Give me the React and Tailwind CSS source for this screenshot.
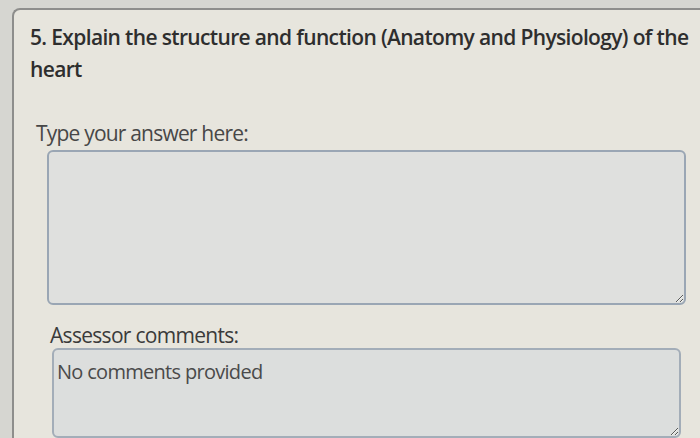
export default function App() {
    return (
        <div className="w-[700px] h-[438px] overflow-hidden bg-[#d6d6d1] pt-2 pl-3" style={{ fontFamily: '"Open Sans", "Liberation Sans", sans-serif' }}>
            {/* question card */}
            <div className="h-[440px] rounded-tl-lg border-l-2 border-t-2 border-[#8e8e8c] bg-[#e7e5dd] pt-[11px]">
                <h2 className="ml-[16px] text-[21px] leading-[32px] font-semibold text-[#2e2e2e] tracking-[-0.65px]">
                    5. Explain the structure and function (Anatomy and Physiology) of the heart
                </h2>

                <p className="ml-[22px] mt-[35px] text-[21px] leading-[26px] text-[#474747] tracking-[-0.8px]">Type your answer here:</p>
                <textarea
                    readOnly
                    className="block ml-[33px] mt-[4px] w-[639px] h-[155px] rounded-md border-2 border-[#9aa6b4] bg-[#dfe0de] resize"
                />

                <p className="ml-[36px] mt-[19px] text-[21px] leading-[22px] text-[#3a3a3a] tracking-[-0.7px]">Assessor comments:</p>
                <textarea
                    readOnly
                    defaultValue="No comments provided"
                    className="block ml-[38px] mt-[2px] w-[629px] h-[90px] rounded-md border-2 border-[#a3adb8] bg-[#dcdedd] px-[3px] py-[10px] text-[20px] leading-[24px] text-[#4a4a4a] tracking-[-0.7px] resize"
                />
            </div>
        </div>
    )
}
